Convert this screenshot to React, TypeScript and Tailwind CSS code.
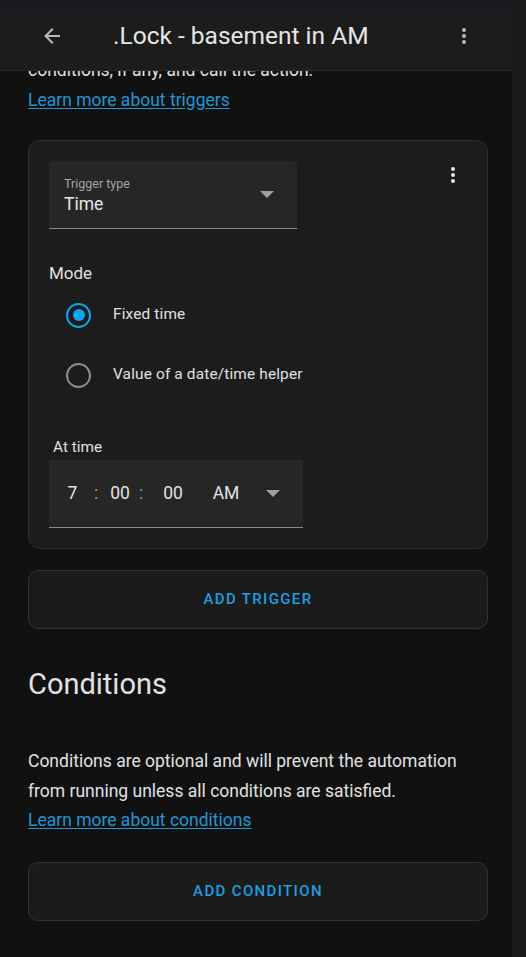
import { useState } from 'react';

const ArrowLeft = () => (
  <svg width="24" height="24" viewBox="0 0 24 24" fill="#bdbdbd">
    <path d="M20,11V13H8L13.5,18.5L12.08,19.92L4.16,12L12.08,4.08L13.5,5.5L8,11H20Z" />
  </svg>
);

const Kebab = ({ color = '#bdbdbd' }: { color?: string }) => (
  <svg width="24" height="24" viewBox="0 0 24 24" fill={color}>
    <path d="M12,16A2,2 0 0,1 14,18A2,2 0 0,1 12,20A2,2 0 0,1 10,18A2,2 0 0,1 12,16M12,10A2,2 0 0,1 14,12A2,2 0 0,1 12,14A2,2 0 0,1 10,12A2,2 0 0,1 12,10M12,4A2,2 0 0,1 14,6A2,2 0 0,1 12,8A2,2 0 0,1 10,6A2,2 0 0,1 12,4Z" />
  </svg>
);

const Caret = () => (
  <svg width="14" height="8" viewBox="0 0 14 8" fill="#9e9e9e">
    <path d="M0 0 L14 0 L7 7 Z" />
  </svg>
);

const Radio = ({ checked }: { checked: boolean }) => (
  <span
    className={`flex h-[25px] w-[25px] items-center justify-center rounded-full border-[2.5px] ${
      checked ? 'border-[#0ea5ee]' : 'border-[#8c8c8c]'
    }`}
  >
    {checked && <span className="h-[12px] w-[12px] rounded-full bg-[#0ea5ee]" />}
  </span>
);

const OutlineButton = ({ label }: { label: string }) => (
  <button className="flex h-[59px] w-full items-center justify-center rounded-[10px] border border-[#323232] bg-[#1b1b1b] text-[15px] font-medium tracking-[0.09em] text-[#1f9ee0]">
    {label}
  </button>
);

export default function App() {
  const [mode, setMode] = useState<'fixed' | 'helper'>('fixed');

  return (
    <div className="flex h-[957px] w-full overflow-hidden bg-[#111111] font-['Roboto',sans-serif] text-[#e1e1e1]">
      <div className="flex w-[512px] flex-col">
        <header className="relative z-10 flex flex-col bg-[#1c1c1c]">
          <div className="h-[8px] bg-[#161a1e]" />
          <div className="flex h-[63px] items-center border-b border-[#2b2b2b] pb-[6px]">
            <div className="flex w-[104px] justify-center">
              <ArrowLeft />
            </div>
            <h1 className="ml-[9px] flex-1 text-[24.5px] leading-none text-[#e6e6e6]">.Lock - basement in AM</h1>
            <div className="flex w-[96px] justify-center">
              <Kebab />
            </div>
          </div>
        </header>

        <main className="flex-1 overflow-hidden pl-[28px] pr-[24px]">
          <p className="-mt-[15px] text-[17.5px] leading-[29.5px] text-[#e1e1e1]">
            conditions, if any, and call the action.
            <br />
            <a className="text-[#2196d6] underline underline-offset-2">Learn more about triggers</a>
          </p>

          <section className="mt-[25px] rounded-[12px] border border-[#303030] bg-[#1c1c1c] p-5">
            <div className="flex items-start justify-between">
              <div className="flex h-[68px] w-[248px] items-center justify-between rounded-t-[4px] border-b border-[#8a8a8a] bg-[#262626] pl-[15px] pr-[23px]">
                <div className="flex flex-col pt-[2px]">
                  <span className="text-[12.5px] leading-[16px] text-[#a5a5a5]">Trigger type</span>
                  <span className="text-[17.5px] leading-[24px] text-[#e6e6e6]">Time</span>
                </div>
                <Caret />
              </div>
              <div className="pr-[2px] pt-[2px]">
                <Kebab color="#e6e6e6" />
              </div>
            </div>

            <div className="mt-[32px] text-[17px] leading-[24px]">Mode</div>

            <div className="flex flex-col">
              <label className="flex h-[60px] items-center" onClick={() => setMode('fixed')}>
                <span className="flex w-[59px] justify-center">
                  <Radio checked={mode === 'fixed'} />
                </span>
                <span className="pl-[5px] text-[15.4px] tracking-[0.01em]">Fixed time</span>
              </label>
              <label className="flex h-[60px] items-center" onClick={() => setMode('helper')}>
                <span className="flex w-[59px] justify-center">
                  <Radio checked={mode === 'helper'} />
                </span>
                <span className="pl-[5px] text-[15.4px] tracking-[0.01em]">Value of a date/time helper</span>
              </label>
            </div>

            <div className="mt-[32px] pl-[4px] text-[15.4px] leading-[20px]">At time</div>
            <div className="mt-[3px] flex h-[68px] w-[254px] items-center border-b border-[#8a8a8a] bg-[#262626] pl-[12px] text-[17.5px] text-[#e1e1e1]">
              <span className="w-[23px] text-center">7</span>
              <span className="w-[24px] text-center text-[#9a9a9a]">:</span>
              <span className="w-[24px] text-center">00</span>
              <span className="w-[18px] text-center text-[#9a9a9a]">:</span>
              <span className="w-[46px] text-center">00</span>
              <span className="w-[60px] text-center">AM</span>
              <span className="flex w-[34px] justify-center">
                <Caret />
              </span>
            </div>
          </section>

          <div className="mt-[21px]">
            <OutlineButton label="ADD TRIGGER" />
          </div>

          <h2 className="mt-[37px] text-[29px] leading-[36px] text-[#e1e1e1]">Conditions</h2>

          <p className="mt-[45px] text-[17.5px] leading-[29.5px] text-[#e1e1e1]">
            Conditions are optional and will prevent the automation from running unless all conditions are
            satisfied.
            <br />
            <a className="text-[#2196d6] underline underline-offset-2">Learn more about conditions</a>
          </p>

          <div className="mt-[26px]">
            <OutlineButton label="ADD CONDITION" />
          </div>
        </main>
      </div>
      <div className="flex-1 bg-[#1b1b1b]" />
    </div>
  );
}
